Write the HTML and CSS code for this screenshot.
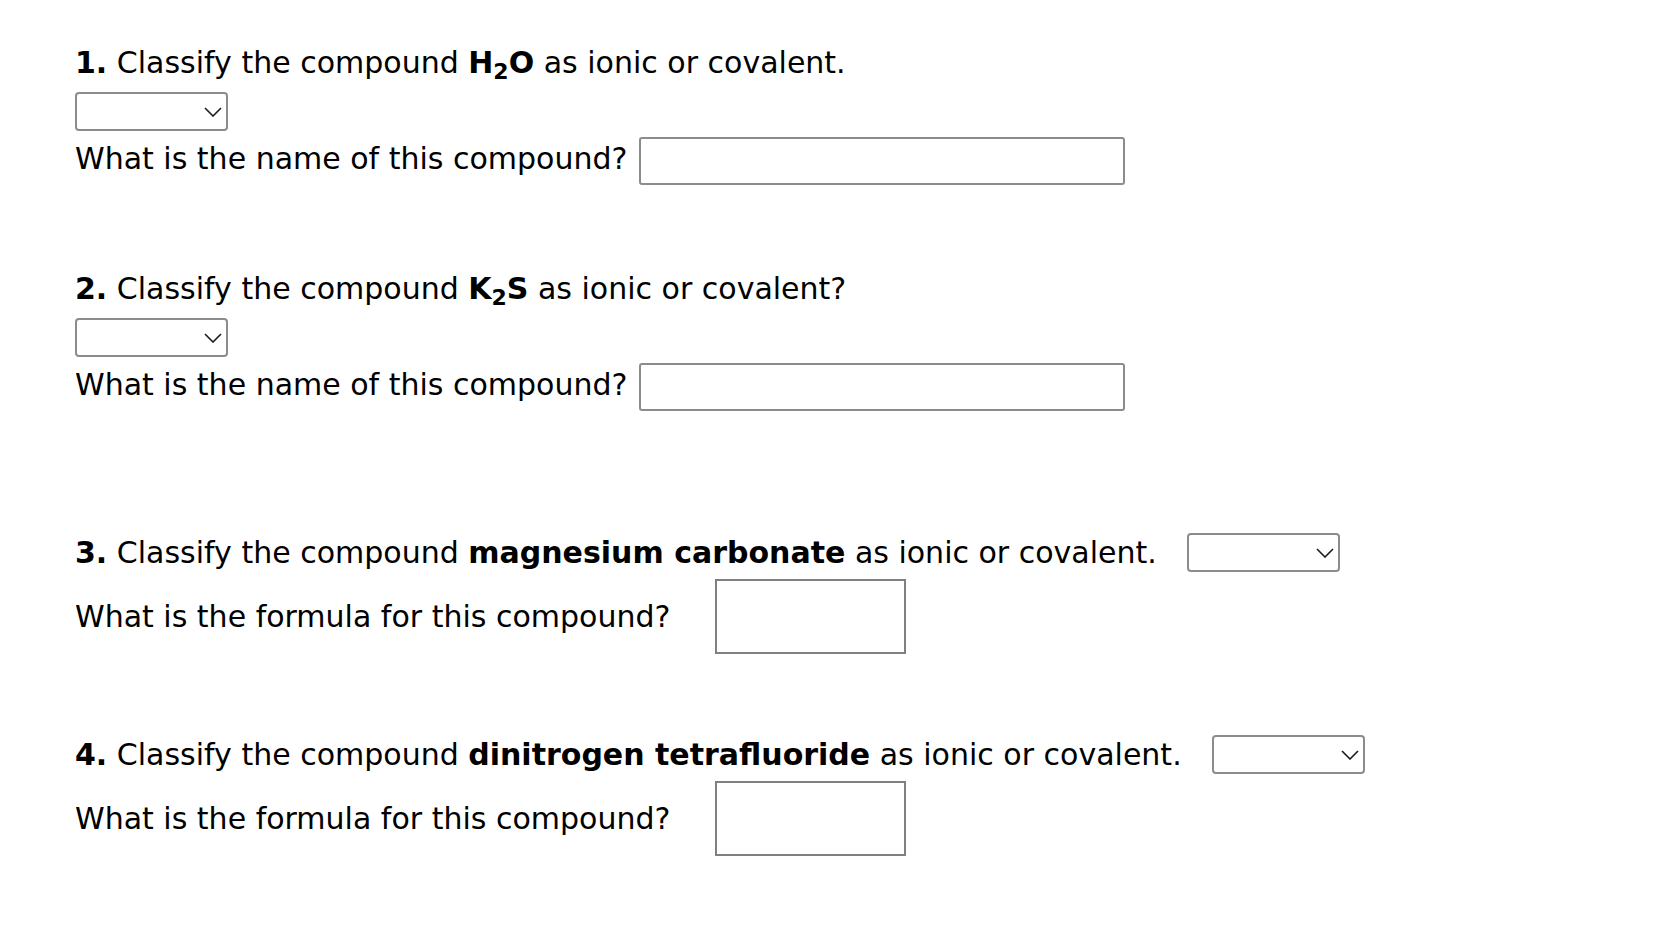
FILE: index.html
```html
<!DOCTYPE html>
<html lang="en">
<head>
<meta charset="UTF-8">
<title>Ionic or covalent</title>
<link rel="stylesheet" href="styles.css">
</head>
<body>
<div class="page">

  <div class="question q1">
    <div class="line"><b>1.</b>&nbsp;Classify the compound&nbsp;<b>H<sub>2</sub>O</b>&nbsp;as ionic or covalent.</div>
    <div class="line pick">
      <span class="dropdown">
        <select><option></option><option>ionic</option><option>covalent</option></select>
        <svg class="chevron" width="18" height="10" viewBox="0 0 18 10"><polyline points="1,1 9,9 17,1" fill="none" stroke="#1a1a1a" stroke-width="1.6"/></svg>
      </span>
    </div>
    <div class="line answer">
      <span class="label">What is the name of this compound?</span>
      <input type="text" class="name-box">
    </div>
  </div>

  <div class="question q2">
    <div class="line"><b>2.</b>&nbsp;Classify the compound&nbsp;<b>K<sub>2</sub>S</b>&nbsp;as ionic or covalent?</div>
    <div class="line pick">
      <span class="dropdown">
        <select><option></option><option>ionic</option><option>covalent</option></select>
        <svg class="chevron" width="18" height="10" viewBox="0 0 18 10"><polyline points="1,1 9,9 17,1" fill="none" stroke="#1a1a1a" stroke-width="1.6"/></svg>
      </span>
    </div>
    <div class="line answer">
      <span class="label">What is the name of this compound?</span>
      <input type="text" class="name-box">
    </div>
  </div>

  <div class="question q3">
    <div class="line">
      <span><b>3.</b> Classify the compound <b>magnesium carbonate</b> as ionic or covalent.</span>
      <span class="dropdown inline">
        <select><option></option><option>ionic</option><option>covalent</option></select>
        <svg class="chevron" width="18" height="10" viewBox="0 0 18 10"><polyline points="1,1 9,9 17,1" fill="none" stroke="#1a1a1a" stroke-width="1.6"/></svg>
      </span>
    </div>
    <div class="line formula">
      <span>What is the formula for this compound?</span>
      <input type="text" class="formula-box">
    </div>
  </div>

  <div class="question q4">
    <div class="line">
      <span><b>4.</b> Classify the compound <b>dinitrogen tetrafluoride</b> as ionic or covalent.</span>
      <span class="dropdown inline">
        <select><option></option><option>ionic</option><option>covalent</option></select>
        <svg class="chevron" width="18" height="10" viewBox="0 0 18 10"><polyline points="1,1 9,9 17,1" fill="none" stroke="#1a1a1a" stroke-width="1.6"/></svg>
      </span>
    </div>
    <div class="line formula">
      <span>What is the formula for this compound?</span>
      <input type="text" class="formula-box">
    </div>
  </div>

</div>
</body>
</html>
```

FILE: styles.css
```css
body {
  margin: 0;
  background: #fff;
  color: #000;
  font-family: "DejaVu Sans", Verdana, sans-serif;
  font-size: 30px;
}
.page {
  padding: 45px 0 0 75px;
}
.line {
  display: flex;
  align-items: center;
  line-height: 36px;
  white-space: nowrap;
}
b {
  font-weight: bold;
}
sub {
  font-size: 22px;
  line-height: 0;
  vertical-align: -6px;
}

/* spacing between the questions */
.q2 { margin-top: 86px; }
.q3 { margin-top: 122px; }
.q4 { margin-top: 81px; }

.pick { margin-top: 11px; }
.answer { margin-top: 6px; }
.formula { margin-top: 7px; }

/* dropdowns */
.dropdown {
  position: relative;
  display: inline-block;
  height: 39px;
}
.dropdown.inline {
  margin-left: 30px;
}
select {
  appearance: none;
  -webkit-appearance: none;
  display: block;
  width: 153px;
  height: 39px;
  margin: 0;
  padding: 0 8px;
  background: #fff;
  border: 2px solid #8c8c8c;
  border-radius: 4px;
  font-family: inherit;
  font-size: 20px;
}
.chevron {
  position: absolute;
  right: 6px;
  top: 15px;
  pointer-events: none;
}

/* text boxes */
.answer .label {
  margin-bottom: 4px;
}
.name-box {
  box-sizing: border-box;
  width: 486px;
  height: 48px;
  margin: 0 0 0 12px;
  border: 2px solid #8c8c8c;
  border-radius: 3px;
  background: #fff;
}
.formula-box {
  box-sizing: border-box;
  width: 191px;
  height: 75px;
  margin: 0 0 0 45px;
  border: 2px solid #808080;
  border-radius: 0;
  background: #fff;
}
```
